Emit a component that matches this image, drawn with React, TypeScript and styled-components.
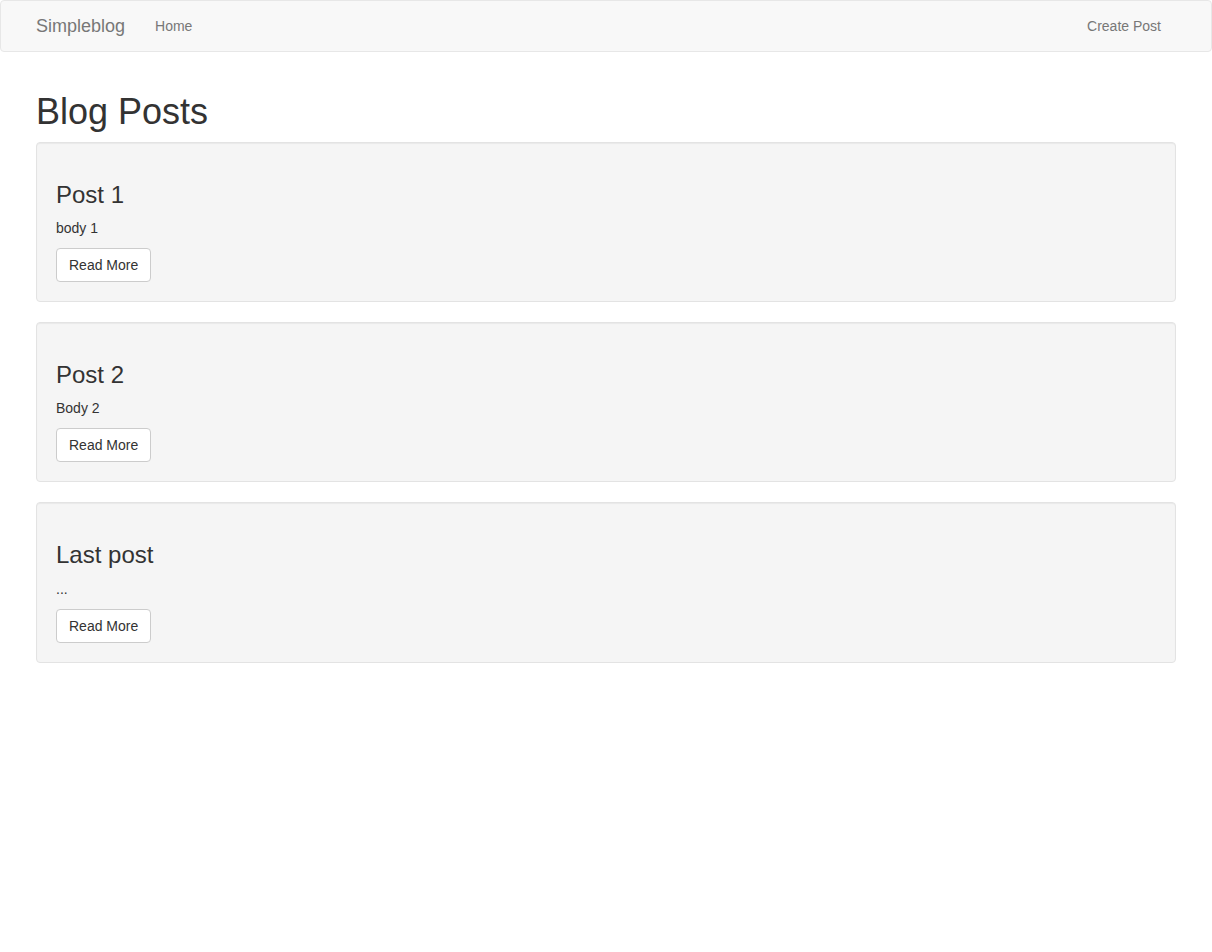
import React from "react";
import styled, { createGlobalStyle } from "styled-components";

const GlobalStyle = createGlobalStyle`
  * { box-sizing: border-box; }
  html, body { margin: 0; padding: 0; }
  body {
    font-family: "Liberation Sans", Arial, Helvetica, sans-serif;
    font-size: 14px;
    line-height: 1.42857143;
    color: #333;
    background: #fff;
  }
`;

const Navbar = styled.nav`
  min-height: 50px;
  background: #f8f8f8;
  border: 1px solid #e7e7e7;
  border-radius: 4px;
  margin-bottom: 20px;
`;

const Container = styled.div`
  width: 1170px;
  margin: 0 auto;
  padding: 0 15px;
  display: flow-root;
`;

const NavInner = styled.div`
  width: 1170px;
  margin: 0 auto;
  display: flex;
  align-items: stretch;
`;

const Brand = styled.a`
  display: block;
  height: 50px;
  padding: 15px;
  font-size: 18px;
  line-height: 20px;
  color: #777;
  text-decoration: none;
`;

const NavLinks = styled.ul<{ $right?: boolean }>`
  list-style: none;
  margin: 0;
  padding: 0;
  display: flex;
  margin-left: ${(p) => (p.$right ? "auto" : "0")};
  margin-right: ${(p) => (p.$right ? "15px" : "0")};
`;

const NavLink = styled.a`
  display: block;
  padding: 15px;
  line-height: 20px;
  font-size: 14px;
  color: #777;
  text-decoration: none;
`;

const Title = styled.h1`
  font-size: 36px;
  font-weight: 500;
  line-height: 1.1;
  margin: 20px 0 10px;
`;

const Well = styled.div`
  min-height: 20px;
  padding: 19px;
  margin-bottom: 20px;
  background: #f5f5f5;
  border: 1px solid #e3e3e3;
  border-radius: 4px;
  box-shadow: inset 0 1px 1px rgba(0, 0, 0, 0.05);
`;

const PostTitle = styled.h3`
  font-size: 24px;
  font-weight: 500;
  line-height: 1.1;
  margin: 20px 0 10px;
`;

const Body = styled.p`
  margin: 0 0 10px;
`;

const Button = styled.a`
  display: inline-block;
  padding: 6px 12px;
  font-size: 14px;
  line-height: 1.42857143;
  color: #333;
  background: #fff;
  border: 1px solid #ccc;
  border-radius: 4px;
  text-decoration: none;
  vertical-align: middle;
`;

const posts = [
  { title: "Post 1", body: "body 1" },
  { title: "Post 2", body: "Body 2" },
  { title: "Last post", body: "..." },
];

export default function App() {
  return (
    <>
      <GlobalStyle />
      <Navbar>
        <NavInner>
          <Brand href="#">Simpleblog</Brand>
          <NavLinks>
            <li>
              <NavLink href="#">Home</NavLink>
            </li>
          </NavLinks>
          <NavLinks $right>
            <li>
              <NavLink href="#">Create Post</NavLink>
            </li>
          </NavLinks>
        </NavInner>
      </Navbar>
      <Container>
        <Title>Blog Posts</Title>
        {posts.map((p) => (
          <Well key={p.title}>
            <PostTitle>{p.title}</PostTitle>
            <Body>{p.body}</Body>
            <Button href="#">Read More</Button>
          </Well>
        ))}
      </Container>
    </>
  );
}
